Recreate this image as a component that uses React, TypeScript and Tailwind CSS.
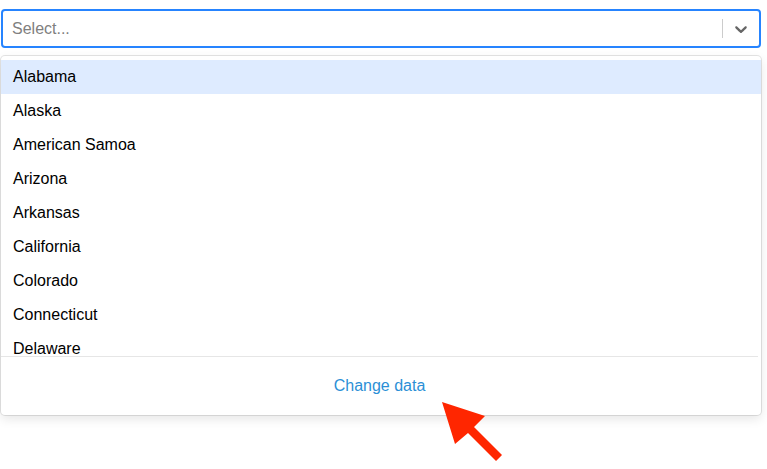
import { useState } from "react";

const states = [
  "Alabama",
  "Alaska",
  "American Samoa",
  "Arizona",
  "Arkansas",
  "California",
  "Colorado",
  "Connecticut",
  "Delaware",
  "District Of Columbia",
];

function Chevron() {
  return (
    <svg width="20" height="20" viewBox="0 0 20 20" className="fill-[#666666]">
      <path d="M4.516 7.548c0.436-0.446 1.043-0.481 1.576 0l3.908 3.747 3.908-3.747c0.533-0.481 1.141-0.446 1.574 0 0.436 0.445 0.408 1.197 0 1.615-0.406 0.418-4.695 4.502-4.695 4.502-0.217 0.223-0.502 0.335-0.787 0.335s-0.57-0.112-0.789-0.335c0 0-4.287-4.084-4.695-4.502s-0.436-1.17 0-1.615z" />
    </svg>
  );
}

export default function App() {
  const [focused, setFocused] = useState(0);

  return (
    <div
      className="relative w-[767px] h-[469px] bg-white pt-[9px] pl-px"
      style={{ fontFamily: '"Liberation Sans", Arial, sans-serif' }}
    >
      <div className="w-[760px]">
        {/* control */}
        <div className="flex items-center h-[39px] rounded border-2 border-[#2684FF] bg-white">
          <div className="flex-1 pl-[9px] text-base text-[#808080]">Select...</div>
          <div className="flex items-center self-stretch">
            <span className="w-px h-[19px] bg-[#cccccc]" />
            <div className="px-2 flex items-center">
              <Chevron />
            </div>
          </div>
        </div>

        {/* menu */}
        <div className="mt-2 rounded bg-white shadow-[0_0_0_1px_rgba(0,0,0,0.1),0_4px_11px_rgba(0,0,0,0.1)]">
          <div className="max-h-[300px] overflow-y-auto py-1 [scrollbar-width:none]">
            {states.map((s, i) => (
              <div
                key={s}
                onMouseEnter={() => setFocused(i)}
                className={`h-[34px] flex items-center px-3 text-base text-black ${
                  focused === i ? "bg-[#DEEBFF]" : "bg-white"
                }`}
              >
                {s}
              </div>
            ))}
          </div>
          <div className="mr-[3px] border-t border-[#e6e6e6] h-[59px] flex items-center justify-center">
            <button className="text-base text-[#2b8fd6] pb-px">Change data</button>
          </div>
        </div>
      </div>

      {/* annotation arrow */}
      <svg
        className="absolute left-[436px] top-[396px]"
        width="72"
        height="72"
        viewBox="0 0 72 72"
      >
        <polygon points="6,6 49,20 38,31 66,59 60,65 32,37 19,48" fill="#ff2600" />
      </svg>
    </div>
  );
}
